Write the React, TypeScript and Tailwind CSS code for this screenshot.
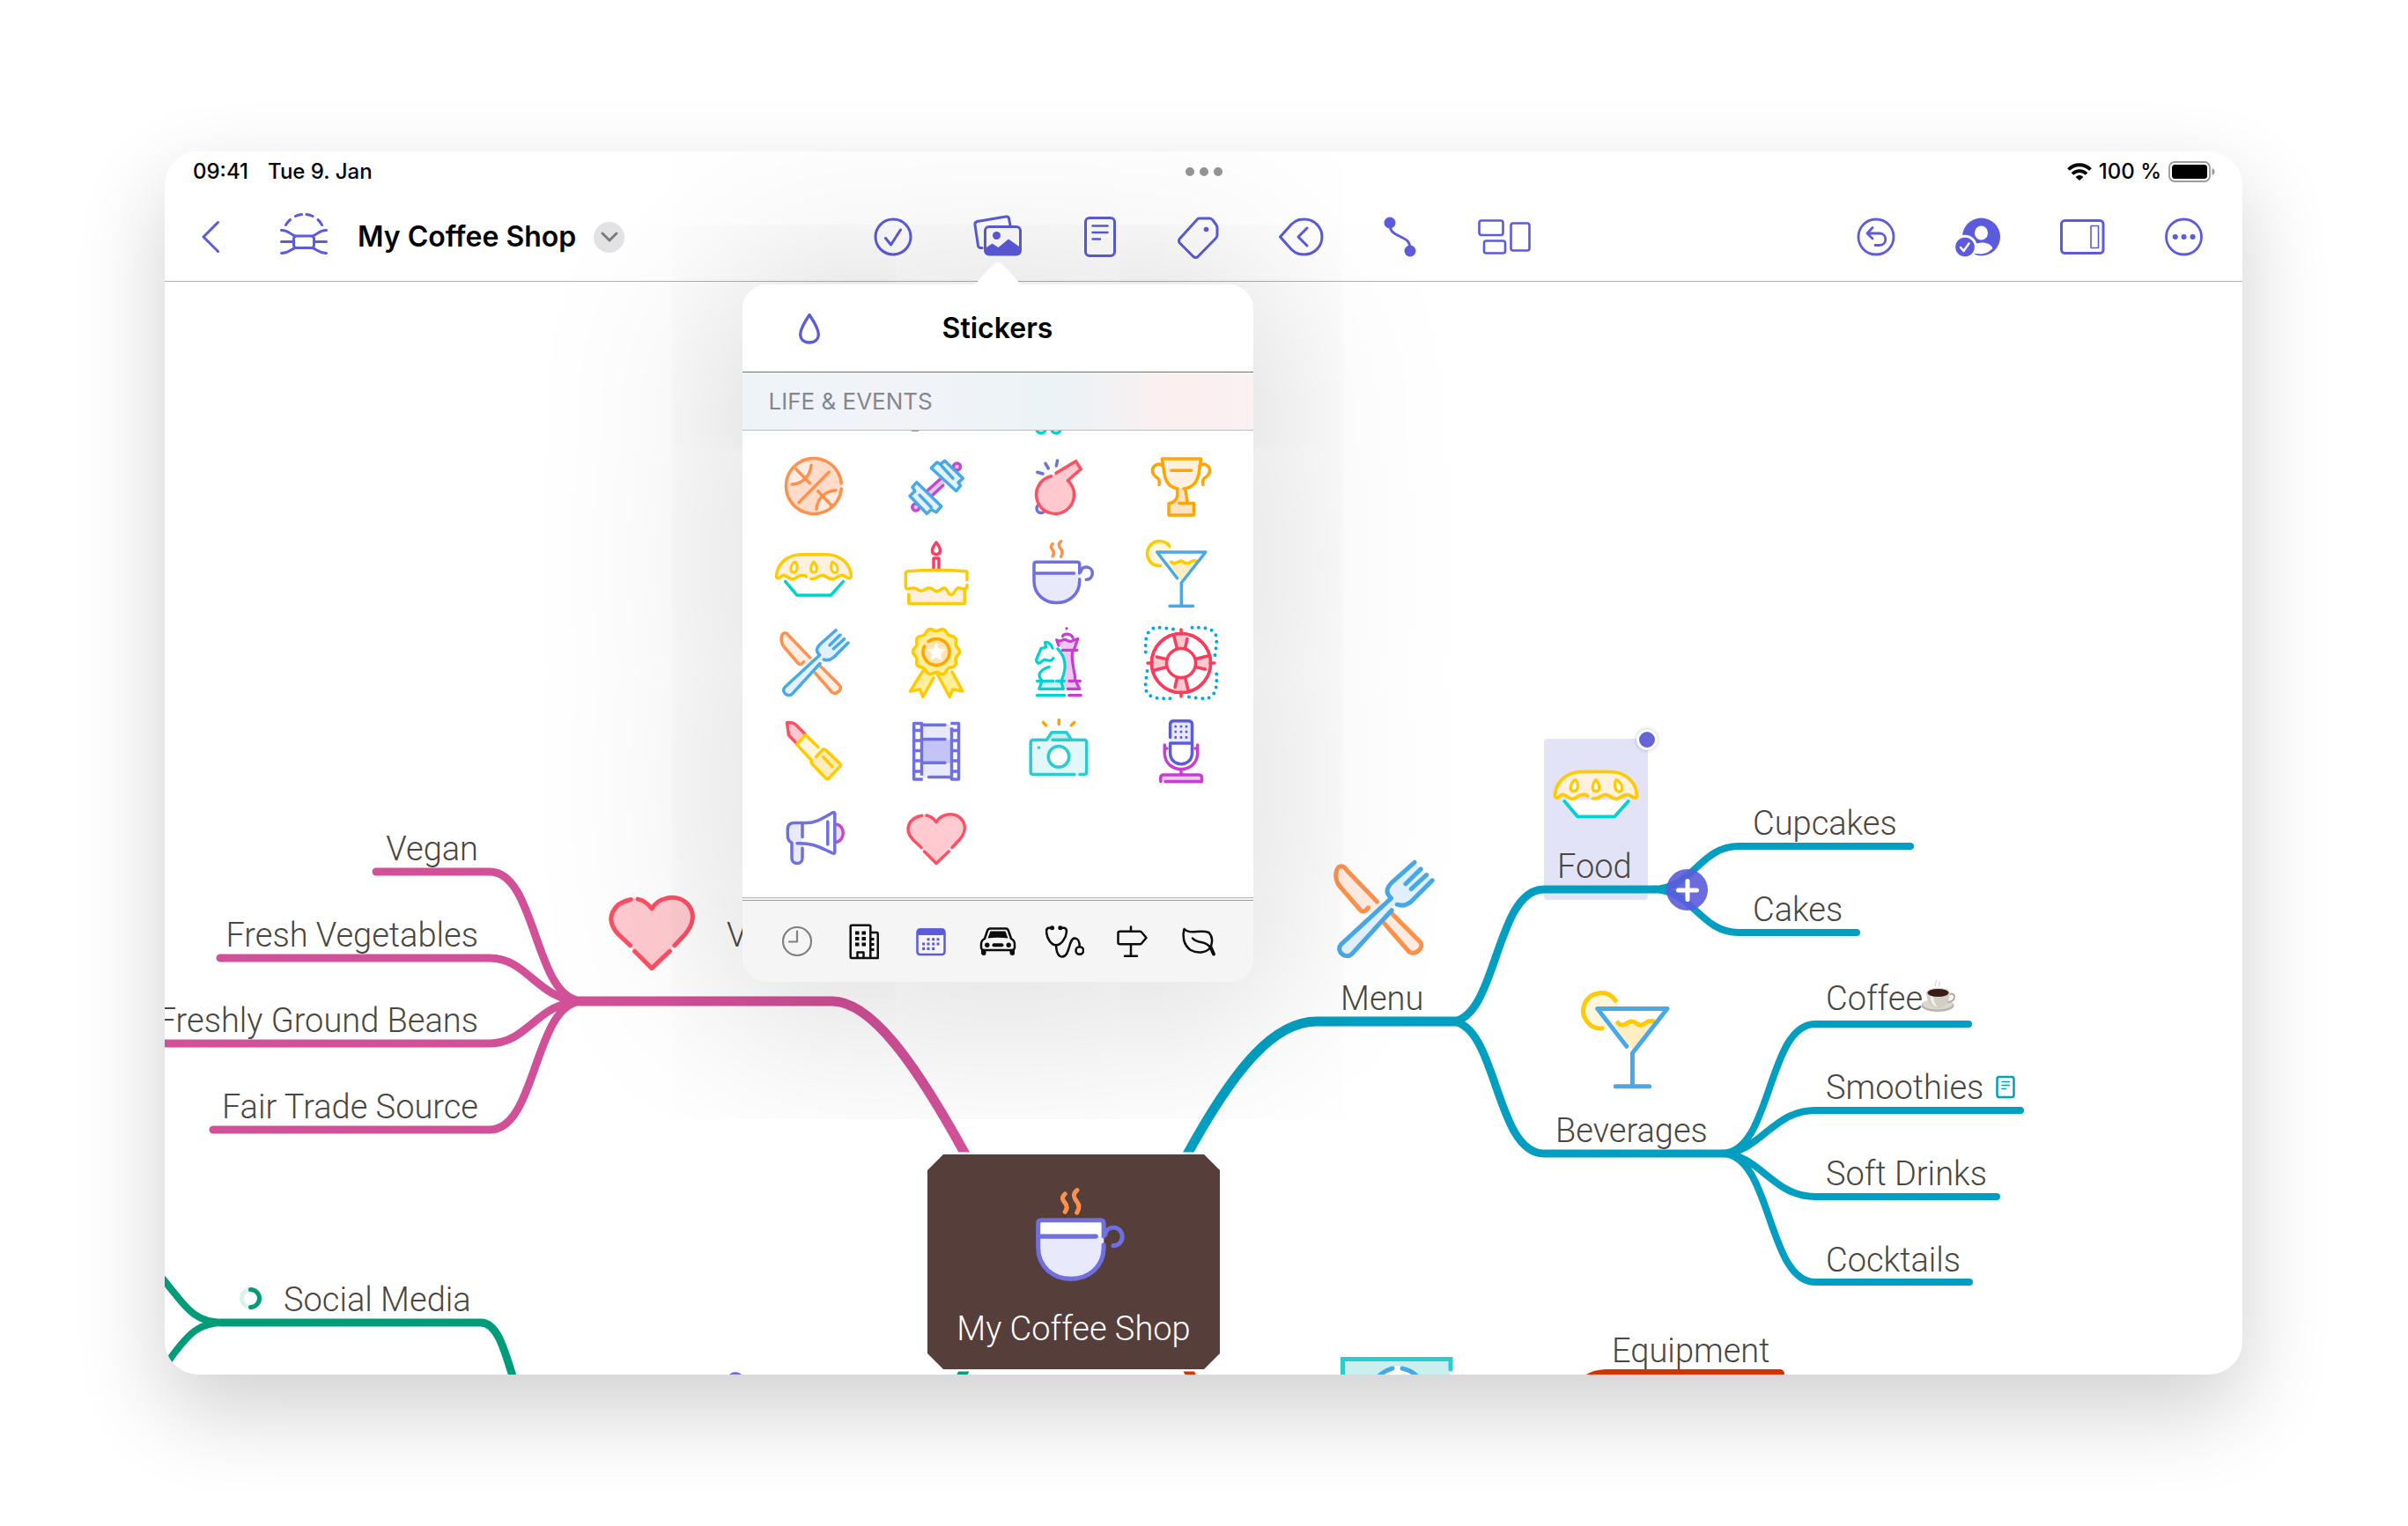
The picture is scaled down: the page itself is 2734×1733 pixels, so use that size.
import React from "react";

const ACCENT = "#5b5bdb";

type Draw = () => React.ReactElement;

/* ---------- stickers, each drawn in a 100 × 100 box ---------- */

const scallop = (() => {
  const pts: string[] = [];
  for (let i = 0; i < 120; i++) {
    const t = (i / 120) * Math.PI * 2;
    const r = 25 + 1.6 * Math.cos(10 * t + Math.PI);
    pts.push(`${(50 + r * Math.sin(t)).toFixed(2)} ${(37 - r * Math.cos(t)).toFixed(2)}`);
  }
  return `M${pts.join("L")}Z`;
})();

const Basketball: Draw = () => (
  <g stroke="#ff914d">
    <circle cx="50" cy="50" r="31.5" fill="#ffdcc9" stroke="none" />
    <path d="M47 24C46 37 38 46 25 47L20 42C21 32 28 23 38 20ZM75 54C62 55 54 63 53 75L58 80C69 78 78 69 80 58Z" fill="#ffece2" stroke="none" />
    <path d="M81.3 46A31.5 31.5 0 1 0 81.3 52" />
    <path d="M33 67.7 67.3 33M47 25.3C46 37 38 46 25.2 47M29.8 29.7 45.5 45.7M75 53.7C62 55 54 63 53 75.3M54.7 54.7 71 72" />
  </g>
);

const Dumbbell: Draw = () => (
  <g>
    <g stroke="#c04bd1" fill="#e9c4ef">
      <path d="M39 55 56 39 60 47 46 60Z" stroke="none" />
      <path d="M39.3 54.7 56.5 39.3M45.8 59.3 57.7 48.3" />
      <circle cx="73.5" cy="27" r="4" />
      <circle cx="26.8" cy="73" r="4" />
    </g>
    <g stroke="#48a9e6" fill="#e3f1fc">
      <path d="M44.3 28.5 50.8 22 54.6 24.3 59.6 20.3 80.3 40.3 75 44.8 77.6 48.7 72.5 54.5Z" />
      <path d="M27.8 44.7 22.9 50.3 25.9 54.7 20 60.3 39.3 80.3 44.3 75.7 50 78.7 55.8 72Z" />
      <path d="M56 26 69 40.3M31 59.3 44.3 73" />
    </g>
  </g>
);

const Whistle: Draw = () => (
  <g>
    <circle cx="30" cy="74.5" r="5" stroke="#6f6fe0" fill="none" />
    <g stroke="#ff4f63" fill="#ffc9cf">
      <path d="M42 37.7 69.5 20.7 75.2 29.7 60.3 42.7Z" stroke="none" />
      <path d="M41.5 37.8A21.5 21.5 0 1 0 60.3 42.7L75.2 29.7 69.5 20.7 47 34.3" />
    </g>
    <path d="M25.8 33.3 32 35M35 23.3 38.3 29M48.6 20 47.3 26" stroke="#6f6fe0" />
  </g>
);

const Trophy: Draw = () => (
  <g stroke="#ffa400">
    <path d="M28.4 18H72.5L70 35C68 46 61 52 50 52S33 46 31 35Z" fill="#fff0e0" stroke="none" />
    <path d="M45 52H55L57 68.5H64.4V82H36V69L43 67Z" fill="#ffe4c4" stroke="none" />
    <path d="M46 52C36 50 32 43 31 35L28.4 18H72.5L70 35C68 46 62 51 53 52" fill="none" />
    <path d="M45.7 53V60Q45 67 36 69V82H64.4V68.5H47.6M55 54 57 67" fill="none" />
    <path d="M29 26C25 22 17.5 25 17.5 31.5 17.5 40 28 38 25 47.5M71 26C75 22 82.5 25 82.5 31.5 82.5 40 72 38 75 47.5" fill="none" />
    <path d="M39 31.3H61.5" />
  </g>
);

const Pie: Draw = () => (
  <g>
    <path d="M17.6 56H83.4L69.3 72.7H31Z" fill="#fff" stroke="none" />
    <path d="M7.5 51C8 36 21 26.7 36 26.7H64C79 26.7 92 37 92.5 51L91 54 81.5 50.5 70 54.7 59.7 50.3 48 54 35 50.5 25 54.5 15 50.5 9 54Z" fill="#fff0e0" stroke="none" />
    <path d="M41.5 51.8Q39 49.5 35.5 50.5C31 51 30 55 25.5 54.7 21 54.5 19 50 15.5 50.3 12.5 50.5 12 54.5 9 53.5 7 53 7.5 50 8 48 10 35 22 26.7 36 26.7H64C78 26.7 90 35 92 48 92.5 50 93 53 91 53.5 88 54.5 86 50.5 82 50.3 77 50.3 75 55 70.5 54.7 65 54.5 64 50.3 59.7 50.3 55 50.5 53 55.5 47 54.3" fill="none" stroke="#ffcb00" />
    <path d="M29 35C33 40 31 47 27 47S23 42 25.5 38 28 36 29 35ZM50 35C55 41 54 47 50 47S45 41 50 35ZM71 35C75 37 77 41 77 44S74.5 47.5 72.5 47 68 40 71 35Z" fill="#fff" stroke="#ffcb00" strokeWidth="3" />
    <path d="M17.6 57.3 31 73H69.3L83.4 57.3" fill="none" stroke="#00d2cf" />
  </g>
);

const Cake: Draw = () => (
  <g>
    <g stroke="#ff3b62" fill="#fff">
      <path d="M50 13C53 17 54.5 20 54.5 22 54.5 25 52.5 26.5 50 26.5S45.5 25 45.5 22C45.5 20 47 17 50 13Z" />
      <path d="M47 43V31H53V43" />
    </g>
    <path d="M18.7 66H82.2V82.7H18.7Z" fill="#fff0e0" stroke="none" />
    <path d="M15.2 47H85V66L76 65 67 72 59 65 51 68 42 65 33 68 24 65 15.2 66Z" fill="#fff" stroke="none" />
    <g fill="none" stroke="#ffcb00">
      <path d="M85 55.5V47.5Q85 46 83.5 45.8 66 44.4 50 44.4T17.5 45.8Q15.3 46 15.3 48V63C15.3 68 20 64.7 24 64.7 28 64.7 29.5 68 32.8 68S38 64.7 42.4 64.7C46 64.7 47.5 68.5 50.8 68.5S55 65 59 64.7C63 64.7 63 72.5 67 72.5S70.5 64.7 75.7 64.7C79 64.7 84.5 69 85 61.5" />
      <path d="M18.7 72V81.5Q18.7 82.5 20 82.5H81Q82.2 82.5 82.2 81.5V67" />
    </g>
  </g>
);

const Cup: Draw = () => (
  <g>
    <path d="M22 35.3H73.7V57C73.7 72 62 81.5 47.5 81.5S22 72 22 57Z" fill="#fff" stroke="none" />
    <path d="M22 48H73.7V57C73.7 72 62 81.5 47.5 81.5S22 72 22 57Z" fill="#e9e9fc" stroke="none" />
    <g fill="none" stroke="#6f6fe0">
      <path d="M73.7 48V38Q73.7 35.3 71 35.3H24.7Q22 35.3 22 38V57C22 72 34 81.5 47.8 81.5S73.7 72 73.7 57V54.7M24 48H67.6" />
      <path d="M75 46.5C75.5 43 78 41 81.3 41 85.3 41 88.3 44 88.3 48.1S85.5 55.3 81.3 55.3" />
    </g>
    <path d="M43.2 14.5C39.5 18 42 20 43.5 22 45.5 25 44.5 27 43.2 28.7M52.8 11.5C48.5 15 50.5 18 52.5 20.5 55.5 24 54 27 52.6 29.2" fill="none" stroke="#ff914d" />
  </g>
);

const Cocktail: Draw = () => (
  <g>
    <circle cx="25.5" cy="25.5" r="14" fill="#fff6dc" stroke="none" />
    <path d="M22.7 24H77.8L50.3 59Z" fill="#fff" stroke="none" />
    <path d="M34 34 40 36 45 34 50 37 56 34 62 36 69 34 50.3 57Z" fill="#ffeec2" stroke="none" />
    <path d="M37 17.5A14 14 0 1 0 26.5 39.5M38.8 35C41 37.5 43 37.5 46 35.5 49 33.5 51 33.5 53.5 35.5 56 38 58 37 61 35Q64 33 67 34" fill="none" stroke="#ffcb00" />
    <path d="M45.7 53.7 22.7 24H77.8L50.3 59V85.3M37 85.3H63.6" fill="none" stroke="#48a9e6" />
  </g>
);

const Cutlery: Draw = () => (
  <g>
    <g stroke="#ff914d" fill="#ffece2">
      <path d="M38 49Q35 53 32 49.5L16 31C11 24 13 15 17.6 15.8Q20 16 22 19L79.5 76C82 80 78 86 73.5 84Z" stroke="none" />
      <path d="M38.6 48.5Q35 53.5 32 50L16 31.5C11 25 13 15 17.6 15.8Q19.5 16 21.4 18.7L45.5 43.7M51.3 61 70.5 83C75 87 83 80 79.5 75.5L57 53" fill="none" />
    </g>
    <g stroke="#48a9e6" fill="#e3f1fc">
      <path d="M56.6 41C51 36 54 32 57 28.7L75 12.7 89 27 72.3 43.7Q67 48 60 45.5L25 85.3C20 90 13 84 16 80Z" stroke="none" />
      <path d="M57 50.5 26 84.5C21 90 12.5 83 17 77.5L56.6 41C51 36 54 32 57 28.7L75 12.7M80 18 68 29.7M84.5 22.7 72.3 33.7M89 27 72.3 43.7Q67 48 61.2 46" fill="none" />
    </g>
  </g>
);

const Rosette: Draw = () => (
  <g stroke="#ffcb00">
    <path d="M34.7 59 20.5 82 31.7 79.7 34.7 88.5 47 66 50 60 65.3 88.5 68.8 79.7 80 82 68 60Z" fill="#ffee9a" stroke="none" />
    <path d={scallop} fill="#ffee9a" />
    <path d="M34.7 59 20.5 82 31.7 79.7 34.7 88.5 47 67M51 62 65.3 88.5 68.8 79.7 80 82 68 60" fill="none" />
    <circle cx="50" cy="37.5" r="15" fill="#ffe3b0" stroke="none" />
    <path d="M41 25.5A15 15 0 1 1 36.5 31" fill="none" stroke="#ffa400" />
    <path d="M50 27.5 52.8 34 59.8 34.7 54.5 39.5 56 46.5 50 43 44 46.5 45.5 39.5 40.2 34.7 47.2 34Z" fill="#fff" stroke="#fff" strokeWidth="1" />
  </g>
);

const Chess: Draw = () => (
  <g strokeWidth="3.2">
    <g stroke="#c93bd4" fill="none">
      <path d="M48 24H72L67.5 35 68.7 69 73.7 79H55V36Z" fill="#f0c8f3" stroke="none" />
      <path d="M59 10.7V10.8M54.5 19.5C56 16 64 16 66 21M50 30 47.7 23.7Q51 26 54 24 57 22.5 60 24.5 64 26.5 67 24L71.8 22.5 67.5 34.5M54.2 35.3H71M65.6 37C63.5 50 69 60 68.7 68.7M61.8 70.3H74.4M70.6 73 73.7 79.3H60.3M61.8 86.7H75.2" />
    </g>
    <path d="M35 26 43 33 49 34C58 42 58 56 54 70L55.3 79H28L30 70C27 62 28 58 35 55L26 49C25 44 30 36 35 26Z" fill="#fff" stroke="none" />
    <path d="M31 70H53L55.3 79H28Z" fill="#ccf5f5" stroke="none" />
    <g stroke="#00d2cf" fill="none">
      <path d="M43.8 44.5C41 50 37 46 34 46 31 47 29 51 26.6 50 24 48 24.5 46 25 45L30 33.5 35.5 32 34.5 26.5C39 26 41.5 29 43 33" />
      <path d="M48.8 33.7C57 42 60 54 53.4 69M39.2 54.3C29 58 25 63 30.4 69M25.5 70.3H43.8M47.6 70.3H56.5M30.4 72 27.8 79.3H55.3L53 72M25.5 86.7H56.5" />
    </g>
  </g>
);

const Lifebuoy: Draw = () => (
  <g>
    <g fill="#ffc9cf" stroke="#ff3b5c">
      <circle cx="50" cy="50" r="33.5" fill="#fff" />
      {[0, 90, 180, 270].map((a) => (
        <g key={a} transform={`rotate(${a} 50 50)`}>
          <path d="M41.5 18 45.5 34H54.5L58.5 18Z" stroke="none" />
          <path d="M41.8 19 45.3 33M57 22.5 54.6 33M50 12V17" fill="none" />
        </g>
      ))}
      <circle cx="50" cy="50" r="33.5" fill="none" />
      <circle cx="50" cy="50" r="16.5" fill="#fff" />
    </g>
    <g fill="none" stroke="#00a7ec" strokeWidth="4" strokeDasharray="0 7.6">
      {[0, 90, 180, 270].map((a) => (
        <path key={a} transform={`rotate(${a} 50 50)`} d="M41 11.5C25 9 20 9 15.5 12 10 17 9 25 10 41" />
      ))}
    </g>
  </g>
);

const Lipstick: Draw = () => (
  <g>
    <path d="M29.8 40.5 21.5 32 19.5 17.7Q27 17 31 21.5L40 30.5" fill="#ffc9cf" stroke="#ff4f63" />
    <path d="M40.5 31.5 29.8 43 49 63 60 50Z" fill="#fff6dc" stroke="none" />
    <path d="M55 45.5 40.5 31.5 30.5 42.5 48 61" fill="none" stroke="#ffcb00" />
    <path d="M52 56 47 63 65.4 82 80.7 66 61.6 47.5Z" fill="#ffecbc" stroke="none" />
    <path d="M52.5 56.5 60 48.5Q61.6 47 63.2 48.5L79.5 64Q81 66 79.5 67.5L67 81Q65.4 82.5 63.8 81L48 64.5Q46.5 63 47.5 60.5M60.4 56.5 71 67.5" fill="none" stroke="#ffcb00" />
  </g>
);

const Film: Draw = () => (
  <g stroke="#6f6fe6" strokeLinecap="square">
    <path d="M34.5 20H66.5V80H34.5Z" fill="#e9e9fc" stroke="none" />
    <path d="M34.5 37H66.5V63.5H34.5Z" fill="#c3c3f5" stroke="none" />
    <path d="M33 82H24.6V18.6H33.5V76M24.6 26.5H33M24.6 38H33M24.6 49.5H33M24.6 61H33M24.6 73H33" fill="#fff" />
    <path d="M68 18.6H75.5V82H67.5V25M67.5 26.5H75M67.5 38H75M67.5 49.5H75M67.5 61H75M67.5 73H75" fill="#fff" />
    <path d="M36 20.3H60M36 36.5H60M36 63.3H60M41.5 79.5H66" strokeLinecap="round" />
  </g>
);

const Camera: Draw = () => (
  <g>
    <g fill="#e2f7f7" stroke="#2bcccf">
      <path d="M22 37H78Q81.7 37 81.7 40.5V73Q81.7 76.5 78 76.5H22Q18.2 76.5 18.2 73V40.5Q18.2 37 22 37Z" stroke="none" />
      <path d="M36.5 37 42 28.7H59L64.5 37Z" fill="#c6eeee" stroke="none" />
      <path d="M68 76.5H21.5Q18.2 76.5 18.2 73.5V40.5Q18.2 37.3 21.5 37.3H36.5L42 28.7H59L64.5 37.3M43 37.3H78.5Q81.7 37.3 81.7 40.5V73.5Q81.7 76.5 78.5 76.5H74" fill="none" />
      <circle cx="50" cy="56.3" r="11.8" fill="#fff" />
      <path d="M27.4 46V46.1" />
    </g>
    <path d="M32.5 17.3 35.5 20.7M50.3 14.5V19.5M67.7 17.3 64.5 20.7" stroke="#ffa400" />
  </g>
);

const Mic: Draw = () => (
  <g fill="none">
    <path d="M37.6 41V20Q37.6 15.8 42 15.8H58Q62.5 15.8 62.5 20V41Z" fill="#e9e9fc" />
    <g stroke="#5b5be0">
      <path d="M37.6 34.5V20Q37.6 15.8 42 15.8H58Q62.5 15.8 62.5 20V52C62.5 69 37.6 69 37.6 52V41H62.5" />
      <path d="M43.7 22V22.1M50 22V22.1M56 22V22.1M43.7 28V28.1M50 28V28.1M56 28V28.1M43.7 34.3V34.4M50 34.3V34.4M56 34.3V34.4" strokeWidth="3" />
    </g>
    <g stroke="#c93bd4">
      <path d="M31.3 43V53C32 64 40 70.5 50 70.5S68 64 68.7 53V43M31.3 47H34M68.7 47H66M50 71V76" />
      <path d="M26.8 84.5V80Q27 77 30 77H70Q73.5 77 73.5 80V84.5H32" fill="#f0c8f3" />
    </g>
  </g>
);

const Megaphone: Draw = () => (
  <g>
    <path d="M75 33C86 34 86 52 75 53.5" fill="#f0dcf6" stroke="#c04bd1" />
    <g stroke="#6f6fe0" fill="none">
      <path d="M37 31.5H28Q20.3 31.5 20.3 38.5V46Q20.3 52 25 54V71.5C25 79.5 37 79.5 37 71.5V32Z" fill="#e9e9fc" stroke="none" />
      <path d="M37 31.5H41C54 31 62 24 71.5 19.8Q73.8 19 73.8 21.5V64.5Q73.8 67 71.5 66 56 54.5 37 54.5Z" fill="#fff" stroke="none" />
      <path d="M31 54.7C50 54 58 60 71.5 66Q73.8 67 73.8 64.5V21.5Q73.8 19 71.5 19.8C62 25 54 31.5 41 31.5H28Q20.3 31.5 20.3 38.5V46Q20.3 52 25 54V71.5C25 79.5 37 79.5 37 71.5V60.3M37 33V47.5M65.8 30V56" />
    </g>
  </g>
);

const Heart: Draw = () => (
  <g stroke="#ff4f63" fill="none">
    <path d="M50 77.5 24 51C9 34 25 18 39 22.5Q45 24 50 30 55 24 61 22.5C75 18 91 34 76 51Z" fill="#ffcbd1" stroke="none" />
    <path d="M36.5 64 50 77.5 64.2 64M68 59.5 76 51C91 34 76 18 61 22.5Q54 24 50 30.5 45 24 39 23M33.5 23.3C20 26 12 38 23.5 50.5L33 59.5" />
  </g>
);

const STROKE = 3.5;

function Sticker({ draw: D, className }: { draw: Draw; className: string }) {
  return (
    <svg viewBox="0 0 100 100" className={className} fill="none" strokeWidth={STROKE} strokeLinecap="round" strokeLinejoin="round" aria-hidden="true">
      <D />
    </svg>
  );
}

const STICKERS: { name: string; draw: Draw }[] = [
  { name: "Basketball", draw: Basketball },
  { name: "Dumbbell", draw: Dumbbell },
  { name: "Whistle", draw: Whistle },
  { name: "Trophy", draw: Trophy },
  { name: "Pie", draw: Pie },
  { name: "Cake", draw: Cake },
  { name: "Coffee", draw: Cup },
  { name: "Cocktail", draw: Cocktail },
  { name: "Cutlery", draw: Cutlery },
  { name: "Rosette", draw: Rosette },
  { name: "Chess", draw: Chess },
  { name: "Lifebuoy", draw: Lifebuoy },
  { name: "Lipstick", draw: Lipstick },
  { name: "Film", draw: Film },
  { name: "Camera", draw: Camera },
  { name: "Microphone", draw: Mic },
  { name: "Megaphone", draw: Megaphone },
  { name: "Heart", draw: Heart },
];

/* ---------- sticker categories, 44 × 44 ---------- */

const CATEGORIES: { name: string; color: string; icon: React.ReactElement }[] = [
  {
    name: "Recent",
    color: "text-[#808080]",
    icon: (
      <g strokeWidth="2.2">
        <circle cx="22" cy="22" r="16" />
        <path d="M22 10.5V22.5H13" />
      </g>
    ),
  },
  {
    name: "Business",
    color: "text-[#0c0c0c]",
    icon: (
      <g>
        <path d="M8 3.7H28Q29.3 3.7 29.3 5V41H8Q6.7 41 6.7 40V5Q6.7 3.7 8 3.7ZM29.3 12H36.5Q37.7 12 37.7 13.5V41H29.3M14.5 40V34.5H21.5V40" />
        <path d="M12 10.5H16.5V14.5H12ZM19.5 10.5H24V14.5H19.5ZM12 17H16.5V21H12ZM19.5 17H24V21H19.5ZM12 23.5H16.5V27.5H12ZM19.5 23.5H24V27.5H19.5ZM30 18H33.5V21H30ZM30 24H33.5V27H30ZM30 30H33.5V33H30Z" fill="currentColor" stroke="none" />
      </g>
    ),
  },
  {
    name: "Life & Events",
    color: "text-[#5b5bdb]",
    icon: (
      <g>
        <rect x="6.5" y="8.5" width="31" height="28.5" rx="3" />
        <path d="M6 11Q6 7.5 9.5 7.5H34.5Q38 7.5 38 11V15H6Z" fill="currentColor" stroke="none" />
        <path d="M19 19.7V19.8M24.7 19.7V19.8M30 19.7V19.8M13.6 25V25.1M19 25V25.1M24.7 25V25.1M30 25V25.1M13.6 30.3V30.4M19 30.3V30.4M24.7 30.3V30.4" strokeWidth="3" strokeLinecap="square" />
      </g>
    ),
  },
  {
    name: "Travel",
    color: "text-[#0c0c0c]",
    icon: (
      <g>
        <path d="M13 7.5H31Q33 7.5 34 10L37 19Q41 21 41 25V29Q41 31.5 38 32H6Q3 31.5 3 29V25Q3 21 7 19L10 10Q11 7.5 13 7.5Z" />
        <path d="M13.5 10.5H30.5L33.5 18.5Q22 17 10.5 18.5ZM3 31H8.5V36Q8.5 38 6 38T3 36ZM35.5 31H41V36Q41 38 38.5 38T35.5 36Z" fill="currentColor" stroke="none" />
        <circle cx="9.8" cy="26.3" r="2.7" fill="currentColor" stroke="none" />
        <circle cx="34.2" cy="26.3" r="2.7" fill="currentColor" stroke="none" />
        <path d="M17.5 26.3H26.5" strokeWidth="4" />
      </g>
    ),
  },
  {
    name: "Health",
    color: "text-[#0c0c0c]",
    icon: (
      <g>
        <path d="M7 6.7H4Q1 7 1 11C1.5 18 6 26.3 12 26.3S23.5 18 24 11Q24 7 21 6.7H17.5" />
        <path d="M12 26.5C12.5 36 15 39.5 19 39.5 28 39.5 26 19 33 18.5 37 18.5 38.8 23 38.8 28" />
        <circle cx="38.8" cy="32.5" r="4.3" />
        <path d="M7.5 6.7H7.6M16.8 6.7H16.9" strokeWidth="5" />
      </g>
    ),
  },
  {
    name: "Places",
    color: "text-[#0c0c0c]",
    icon: <path d="M21 5.5V10.5M21 26V38.5M14 38.8H28M8.5 10.7H31Q32.3 10.7 33 11.5L38.5 18 33 24.5Q32.3 25.3 31 25.3H8.5Q6.5 25.3 6.5 23.5V12.5Q6.5 10.7 8.5 10.7Z" />,
  },
  {
    name: "Nature",
    color: "text-[#0c0c0c]",
    icon: (
      <g>
        <path d="M5.5 8C12 15 23 8 33.5 12 39 18 37 24 35.5 29 30 35.5 20 36 13 32 4 26 3.5 15 5.5 8Z" />
        <path d="M15 18.5C21 25.5 30 20.5 35 29" />
        <path d="M35.5 28.5 39 36.5" strokeWidth="4" />
      </g>
    ),
  },
];

function StickerPopover() {
  return (
    <section aria-label="Stickers" className="absolute left-1/2 top-[82px] z-20 w-[580px] -translate-x-1/2 rounded-[28px] shadow-[0_10px_220px_24px_rgba(0,0,0,0.16)]">
      <svg viewBox="0 0 70 26" className="absolute -top-[25px] left-1/2 h-[26px] w-[70px] -translate-x-1/2" aria-hidden="true">
        <path d="M4 26C10 25.5 12 22 14 19L28.5 3.5C32.5-1 37.5-1 41.5 3.5L56 19C58 22 60 25.5 66 26Z" fill="#fff" />
      </svg>
      <div className="overflow-hidden rounded-[28px] bg-white">
        <header className="grid h-[100px] grid-cols-3 items-center border-b border-[#6d756f] px-[62px]">
          <button aria-label="Sticker style" className="w-7 justify-self-start">
            <svg viewBox="0 0 28 38" className="h-[38px] w-7" fill="none" stroke={ACCENT} strokeWidth="3.3" strokeLinejoin="round" aria-hidden="true">
              <path d="M14 3.5C19 11 24.3 19 24.3 25.5 24.3 31.5 20 35 14 35S3.7 31.5 3.7 25.5C3.7 19 9 11 14 3.5Z" />
            </svg>
          </button>
          <h2 className="text-center text-[32px] font-semibold leading-10">Stickers</h2>
        </header>
        <h3 className="flex h-[66px] items-center border-b border-[#b9bcbe] bg-[linear-gradient(90deg,#edf4f7_0%,#f2f3f8_30%,#ebf3f6_62%,#fceff0_84%,#f9f1f2_100%)] px-[30px] text-[26px] text-[#84888e]">LIFE &amp; EVENTS</h3>
        <div className="relative px-3 pb-4 pt-[14px]">
          <svg viewBox="0 0 580 10" className="absolute left-0 top-0 h-[10px] w-full" fill="none" stroke="#00d2cf" strokeWidth="3.5" aria-hidden="true">
            <path d="M192 0H200" strokeWidth="2" />
            <path d="M334-2A5 5 0 0 0 344-2M351-2A5 5 0 0 0 361-2" />
          </svg>
          <ul className="grid grid-cols-4">
            {STICKERS.map((s) => (
              <li key={s.name} className="flex justify-center">
                <button aria-label={s.name}>
                  <Sticker draw={s.draw} className="size-[100px]" />
                </button>
              </li>
            ))}
          </ul>
        </div>
        <nav aria-label="Sticker categories" className="border-t border-[#b5b5b5] bg-[#f5f5f5] pt-0.5">
          <div className="flex h-[93px] items-center justify-between border-t border-[#a0a0a0] px-[40px]">
            {CATEGORIES.map((c) => (
              <button key={c.name} aria-label={c.name} className={c.color}>
                <svg viewBox="0 0 44 44" className="size-11" fill="none" stroke="currentColor" strokeWidth="2.5" strokeLinecap="round" strokeLinejoin="round" aria-hidden="true">
                  {c.icon}
                </svg>
              </button>
            ))}
          </div>
        </nav>
      </div>
    </section>
  );
}

/* ---------- toolbar ---------- */

function ToolIcon({ label, width, children }: { label: string; width: number; children: React.ReactNode }) {
  return (
    <button aria-label={label} className="flex h-14 shrink-0 items-center">
      <svg width={width} height="56" viewBox={`0 0 ${width} 56`} className="overflow-visible" fill="none" stroke={ACCENT} strokeWidth="3" strokeLinecap="round" strokeLinejoin="round" aria-hidden="true">
        {children}
      </svg>
    </button>
  );
}

function Toolbar() {
  return (
    <div className="grid grid-cols-[1fr_auto_1fr] items-center pb-[22px] pl-[42px] pr-[45px] pt-[23px]">
      <div className="flex items-center">
        <ToolIcon label="Back" width={20}>
          <path d="M18.5 11.5 2 28 18.5 44.5" />
        </ToolIcon>
        <svg viewBox="0 0 54 56" className="ml-[69px] h-14 w-[54px]" fill="none" stroke={ACCENT} strokeWidth="3" strokeLinecap="round" strokeLinejoin="round" aria-hidden="true">
          <path d="M6.5 14.5Q8.5 11 11.5 8.5M17.5 4.5Q20.5 3 24.5 2.5M30 2.5Q34 3 37 4.5M43 8.5Q46 11 47.5 14.5" />
          <rect x="15.5" y="27" width="23" height="13.5" rx="3" />
          <path d="M1.5 20.5C9 20 11 25 17 27M52.5 20.5C45 20 43 25 37 27M1.5 33.5H15M39 33.5H52.5M1.5 46.5C9 46.5 11 43 17 40.5M52.5 46.5C45 46.5 43 43 37 40.5" />
        </svg>
        <h1 className="ml-[34px] whitespace-nowrap text-[32px] font-semibold leading-10">My Coffee Shop</h1>
        <button aria-label="Document menu" className="ml-5 flex size-[35px] items-center justify-center rounded-full bg-[#e3e3e5]">
          <svg viewBox="0 0 20 12" className="h-3 w-5" fill="none" stroke="#7c7c80" strokeWidth="3" strokeLinecap="round" strokeLinejoin="round" aria-hidden="true">
            <path d="M2 2 10 10 18 2" />
          </svg>
        </button>
      </div>

      <div className="flex items-center gap-[70px]">
        <ToolIcon label="Task" width={42}>
          <circle cx="21" cy="28" r="20" />
          <path d="M12.500 29.500 18.500 37 29.500 20" />
        </ToolIcon>
        <div className="relative">
          <ToolIcon label="Stickers" width={56}>
            <path d="M10 40.500H8.500Q6 40.500 5.500 38L2 14.500Q1.500 11.500 4.500 10.500L37 5Q40 4.500 40.500 7L42 15" />
            <rect x="13.500" y="16.500" width="40" height="31.500" rx="4.500" />
            <circle cx="26.500" cy="26.500" r="4.500" fill={ACCENT} stroke="none" />
            <path d="M13.500 41 21.500 35.500 28.500 40 40 30.500 53.500 40V44Q53.500 48 49.500 48H17.500Q13.500 48 13.500 44Z" fill={ACCENT} stroke="none" />
          </ToolIcon>
          <StickerPopover />
        </div>
        <ToolIcon label="Note" width={36}>
          <rect x="1.500" y="6.500" width="33" height="43" rx="4.500" />
          <path d="M9.500 15.500H26.500M9.500 23H26.500M9.500 30.500H18" strokeWidth="2.500" />
        </ToolIcon>
        <ToolIcon label="Tag" width={46}>
          <path d="M24.500 7H36.500Q38 7 39.500 8.500L44 14.500Q45 16 45 18V26Q45 28 43.500 29.500L23 50.500Q20.500 52.500 18 50.500L2.500 35Q0.500 32.500 2.500 30L22 8.500Q23 7 24.500 7Z" />
          <circle cx="32.500" cy="19.500" r="2.800" fill={ACCENT} stroke="none" />
        </ToolIcon>
        <ToolIcon label="Collapse" width={48}>
          <path d="M0.500 28 13 14C19 8 24 8 28 8A20 20 0 0 1 28 48C24 48 19 48 13 42Z" />
          <path d="M31 18 21 28 31 38" />
        </ToolIcon>
        <ToolIcon label="Connection" width={37}>
          <circle cx="7" cy="12" r="6.500" fill={ACCENT} stroke="none" />
          <circle cx="30" cy="44" r="6.500" fill={ACCENT} stroke="none" />
          <path d="M7 13C7 22 11 24 18.500 27.500S30 33 30 42" />
        </ToolIcon>
        <ToolIcon label="Layout" width={60}>
          <rect x="1.500" y="9.500" width="27" height="16.500" rx="2.500" strokeWidth="2.600" />
          <rect x="7" y="32.500" width="24" height="14" rx="2.500" strokeWidth="2.600" />
          <rect x="37.500" y="12.500" width="21" height="31" rx="2.500" strokeWidth="2.600" />
        </ToolIcon>
      </div>

      <div className="flex items-center gap-[68px] justify-self-end">
        <ToolIcon label="Undo" width={44}>
          <circle cx="22" cy="28" r="20" strokeWidth="2.800" />
          <path d="M12.500 24H26C35 24 35 37.500 26 37.500H21M18 17.500 12 24 18 30" strokeWidth="2.800" />
        </ToolIcon>
        <ToolIcon label="Collaborators" width={51}>
          <circle cx="29.500" cy="28" r="21.500" fill={ACCENT} stroke="none" />
          <ellipse cx="29.500" cy="23.500" rx="7.500" ry="8" fill="#fff" stroke="none" />
          <path d="M15 45C18 33 38 31 42.500 41Q36 47.500 29.500 47.500 22 47.500 15 45Z" fill="#fff" stroke="none" />
          <circle cx="11" cy="39.500" r="12.300" fill={ACCENT} stroke="#fff" strokeWidth="3" />
          <path d="M6 40 9.500 44 15.500 35.500" stroke="#fff" strokeWidth="2.500" />
        </ToolIcon>
        <ToolIcon label="Sidebar" width={51}>
          <rect x="1.500" y="9.500" width="47.500" height="37" rx="4" strokeWidth="3" />
          <rect x="35" y="15.500" width="8.500" height="25" rx="0.500" strokeWidth="1.600" />
        </ToolIcon>
        <ToolIcon label="More" width={43}>
          <circle cx="21.500" cy="28" r="20" strokeWidth="2.800" />
          <path d="M11.700 28H11.800M21.500 28H21.600M31.500 28H31.600" strokeWidth="6" />
        </ToolIcon>
      </div>
    </div>
  );
}

function StatusBar() {
  return (
    <div className="grid h-[46px] grid-cols-3 items-center pl-8 pr-[30px] text-[24px] font-medium">
      <div className="flex gap-[22px]">
        <time>09:41</time>
        <span>Tue 9. Jan</span>
      </div>
      <div className="flex justify-center gap-[6px]">
        <span className="size-[10px] rounded-full bg-[#959595]" />
        <span className="size-[10px] rounded-full bg-[#959595]" />
        <span className="size-[10px] rounded-full bg-[#959595]" />
      </div>
      <div className="flex items-center justify-end gap-2">
        <svg viewBox="0 0 28 20" className="h-5 w-7" fill="none" stroke="#000" strokeWidth="3.800" aria-hidden="true">
          <path d="M1.500 7.500C8.500 0.500 19.500 0.500 26.500 7.500M6 12.500C10.500 8 17.500 8 22 12.500" />
          <path d="M9.500 16Q14 12 18.500 16L14 20Z" fill="#000" stroke="none" />
        </svg>
        <span>100 %</span>
        <svg viewBox="0 0 54 24" className="h-6 w-[54px]" aria-hidden="true">
          <rect x="1" y="1" width="46" height="22" rx="6" fill="none" stroke="#9b9b9b" strokeWidth="1.800" />
          <rect x="4" y="4" width="40" height="16" rx="3.500" />
          <path d="M49.500 8Q52.500 9 52.500 12T49.500 16Z" fill="#9b9b9b" />
        </svg>
      </div>
    </div>
  );
}

/* ---------- mind map ---------- */

const ORIGIN = { x: 187, y: 320 };
const at = (x: number, y: number) => ({ left: x - ORIGIN.x, top: y - ORIGIN.y });

type Label = { text: string; x: number; baseline: number; end?: boolean };

const LABELS: Label[] = [
  { text: "Vegan", x: 543, baseline: 977, end: true },
  { text: "Fresh Vegetables", x: 543, baseline: 1075, end: true },
  { text: "Freshly Ground Beans", x: 543, baseline: 1172, end: true },
  { text: "Fair Trade Source", x: 543, baseline: 1270, end: true },
  { text: "Values", x: 825, baseline: 1075 },
  { text: "Social Media", x: 322, baseline: 1489 },
  { text: "Menu", x: 1522, baseline: 1147 },
  { text: "Food", x: 1768, baseline: 997 },
  { text: "Beverages", x: 1766, baseline: 1297 },
  { text: "Cupcakes", x: 1990, baseline: 948 },
  { text: "Cakes", x: 1990, baseline: 1046 },
  { text: "Coffee", x: 2073, baseline: 1147 },
  { text: "Smoothies", x: 2073, baseline: 1248 },
  { text: "Soft Drinks", x: 2073, baseline: 1346 },
  { text: "Cocktails", x: 2073, baseline: 1444 },
  { text: "Equipment", x: 1830, baseline: 1547 },
];

function MindMap() {
  return (
    <main className="flex min-h-0 flex-1 justify-center overflow-hidden">
      <div className="relative w-[2359px] shrink-0 font-['Roboto',sans-serif] text-[38px] font-light leading-[48px] text-[#4a4640]">
        <div className="absolute h-[183px] w-[118px] rounded-[4px] bg-[#e3e3f8]" style={at(1753, 839)} />

        <svg viewBox="187 320 2359 1241" width="2359" height="1241" className="absolute left-0 top-0" fill="none" strokeLinecap="round" aria-hidden="true">
          <g stroke="#d15098" strokeWidth="9">
            <path d="M427 990H556C610 990 606 1137 662 1137" />
            <path d="M250 1088H556C600 1088 610 1137 662 1137" />
            <path d="M180 1185H556C600 1185 610 1137 662 1137" />
            <path d="M242 1283H556C610 1283 606 1137 662 1137" />
            <path d="M658 1137H945C990 1137 1041 1211 1095 1309L1108 1333" strokeWidth="11" />
          </g>
          <g stroke="#009fc1" strokeWidth="8">
            <path d="M1336 1333 1349 1309C1403 1211 1447 1160 1495 1160H1652" strokeWidth="11" />
            <path d="M1650 1160C1700 1154 1698 1010 1753 1010H1880" strokeWidth="9" />
            <path d="M1650 1160C1700 1166 1698 1310 1753 1310H1957" strokeWidth="9" />
            <path d="M1876 1010C1922 1010 1930 961 1974 961H2169" />
            <path d="M1876 1010C1922 1010 1930 1059 1974 1059H2108" />
            <path d="M1955 1310C2012 1310 2006 1163 2061 1163H2235" />
            <path d="M1955 1310C1998 1310 2012 1261 2061 1261H2294" />
            <path d="M1955 1310C1998 1310 2012 1359 2061 1359H2267" />
            <path d="M1955 1310C2012 1310 2006 1456 2061 1456H2236" />
          </g>
          <g stroke="#009c7a" strokeWidth="9">
            <path d="M180 1446C215 1490 222 1502 254 1502" strokeWidth="8" />
            <path d="M185 1555C215 1510 228 1502 254 1502" strokeWidth="8" />
            <path d="M252 1502H546C564 1502 572 1530 583 1566" />
            <path d="M1108 1530 1088 1570" strokeWidth="11" />
          </g>
          <path d="M1336 1530 1356 1570" stroke="#d33300" strokeWidth="11" />
          <path d="M1785 1580C1804 1562 1812 1560 1826 1560H2021" stroke="#d33300" strokeWidth="10" />
          <path d="M825 1568A10 10 0 0 1 845 1568" fill="#6f6fe0" />
          <g strokeWidth="5">
            <path d="M1524 1543H1646V1575H1524Z" fill="#c9efef" />
            <path d="M1568 1561Q1578 1552 1587 1551 1598 1552 1606 1561Z" fill="#fff" />
            <path d="M1524.500 1575V1543.500H1647V1555" stroke="#2bcccf" />
            <path d="M1565 1563Q1573 1556 1581 1554M1592 1554Q1602 1556 1609 1563" stroke="#48a9e6" />
          </g>
          <path d="M1071 1311H1367L1385 1329V1537L1367 1555H1071L1053 1537V1329Z" fill="#563e3a" stroke="#fff" strokeWidth="5" strokeLinejoin="miter" paintOrder="stroke" />
          <circle cx="284.500" cy="1474.500" r="10" stroke="#dbf1ec" strokeWidth="5" />
          <path d="M284.500 1464.500A10 10 0 0 1 284.500 1484.500" stroke="#009c7a" strokeWidth="5" />
          <g stroke="#009fc1" strokeWidth="2">
            <rect x="2267.500" y="1223" width="19" height="23" rx="2.500" strokeWidth="2.500" />
            <path d="M2273 1228.500H2281.500M2273 1232.500H2281.500M2273 1236.500H2277.500" strokeWidth="1.500" />
          </g>
        </svg>

        {LABELS.map((l) => (
          <span key={l.text} className={l.end ? "absolute -translate-x-full whitespace-nowrap" : "absolute whitespace-nowrap"} style={at(l.x, l.baseline - 37)}>
            {l.text}
          </span>
        ))}

        <svg viewBox="0 0 40 38" className="absolute h-[38px] w-10" style={at(2181, 1112)} role="img" aria-label="Hot beverage">
          <path d="M17 8C14 5 19 4 17 1M21 8C19 6 22 5 21 3" fill="none" stroke="#dcdcdc" strokeWidth="1.500" />
          <ellipse cx="19" cy="30" rx="18.500" ry="7" fill="#b9b3aa" />
          <ellipse cx="19" cy="28.500" rx="17" ry="6" fill="#dcd7d0" />
          <path d="M32 17C41 14 40 27 29 26" fill="none" stroke="#b5afa5" strokeWidth="2.200" />
          <path d="M6 15C7 26 11 33 19.500 33S32 26 33 15Z" fill="#d3cec6" />
          <path d="M10 18C11 26 14 31 19 32 15 27 14 22 14 18Z" fill="#f3f1ed" />
          <ellipse cx="19.500" cy="15" rx="13.500" ry="5.500" fill="#e4e0da" />
          <ellipse cx="19.500" cy="15.500" rx="12" ry="4.600" fill="#3a1d14" />
        </svg>

        <div className="absolute" style={at(668, 988)}>
          <Sticker draw={Heart} className="size-[144px]" />
        </div>
        <div className="absolute" style={at(1498, 961)}>
          <Sticker draw={Cutlery} className="size-[144px]" />
        </div>
        <div className="absolute" style={at(1781, 1111)}>
          <Sticker draw={Cocktail} className="size-[144px]" />
        </div>
        <div className="absolute" style={at(1757, 847)}>
          <Sticker draw={Pie} className="size-[110px]" />
        </div>

        <div className="absolute flex w-[332px] flex-col items-center pt-6 text-white" style={at(1053, 1311)}>
          <Sticker draw={Cup} className="size-[144px]" />
          <span className="mt-[6px] whitespace-nowrap">My Coffee Shop</span>
        </div>

        <span className="absolute size-6 rounded-full border-[3px] border-white bg-[#6565d9] shadow-[0_0_4px_rgba(0,0,0,0.25)]" style={at(1858, 828)} />
        <button aria-label="Add child node" className="absolute flex size-[47px] items-center justify-center rounded-full bg-[#5b5bdb]/90" style={at(1892, 987)}>
          <svg viewBox="0 0 26 26" className="size-[26px]" stroke="#fff" strokeWidth="5" strokeLinecap="round" aria-hidden="true">
            <path d="M13 2.500V23.500M2.500 13H23.500" />
          </svg>
        </button>
      </div>
    </main>
  );
}

export default function App() {
  return (
    <div className="flex h-screen flex-col bg-white py-[172px] pl-[187px] pr-[188px] font-['Inter',sans-serif] text-black">
      <div className="flex min-h-0 flex-1 flex-col overflow-hidden rounded-[38px] bg-white shadow-[0_40px_100px_rgba(0,0,0,0.19)]">
        <header className="relative z-10 border-b border-[#b0b0b0]">
          <StatusBar />
          <Toolbar />
        </header>
        <MindMap />
      </div>
    </div>
  );
}
